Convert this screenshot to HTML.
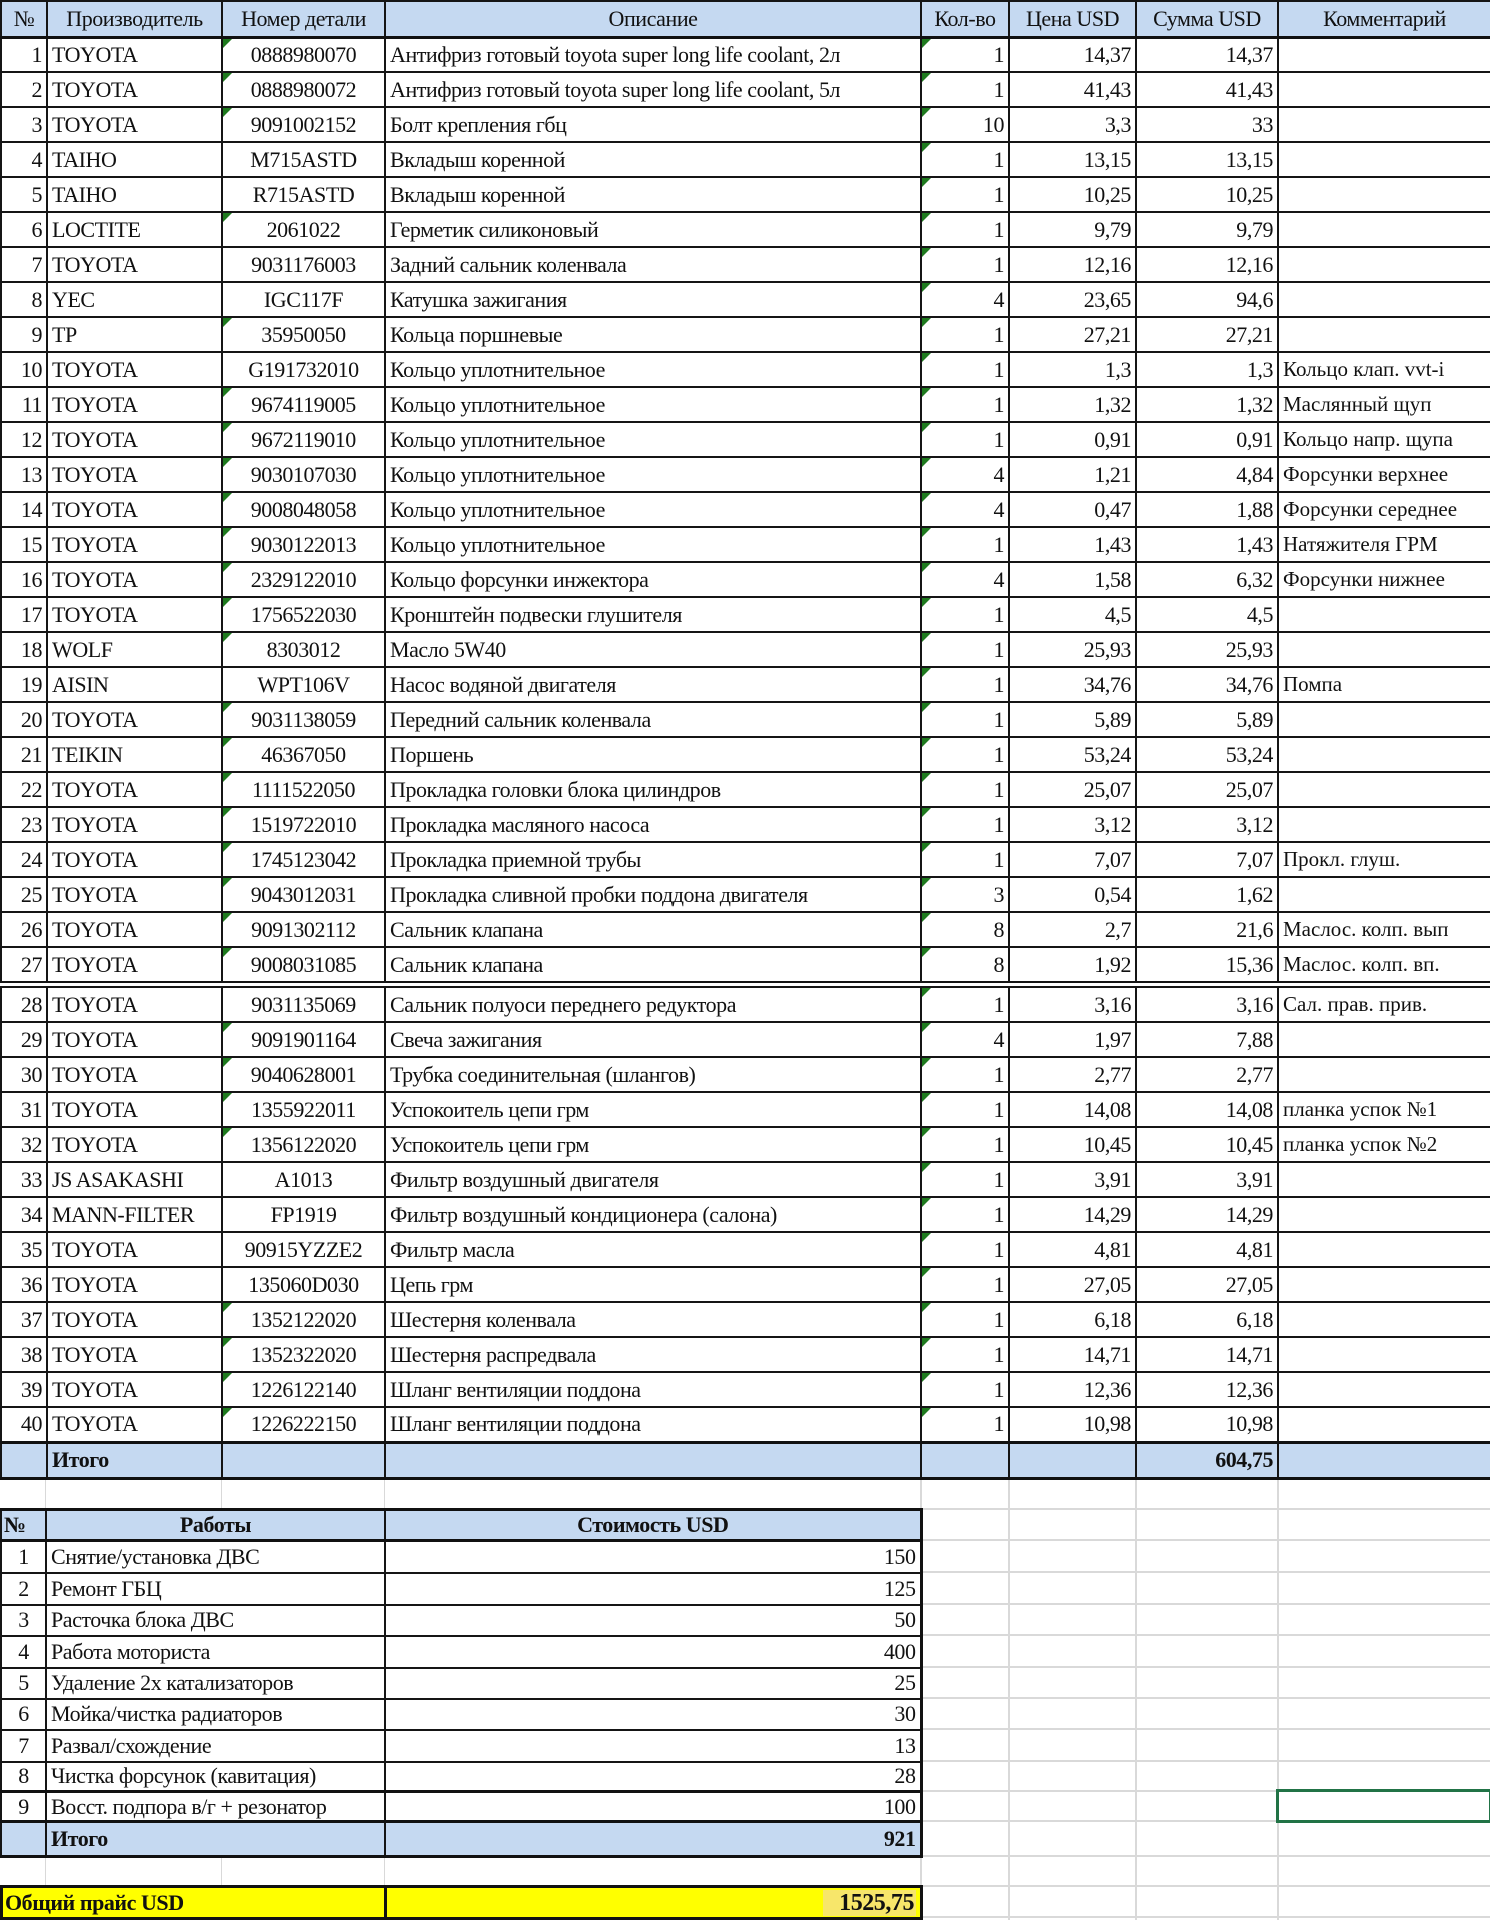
<!DOCTYPE html>
<html><head><meta charset="utf-8">
<style>
*{margin:0;padding:0;box-sizing:border-box}
body{width:1490px;height:1920px;background:#fff;position:relative;overflow:hidden;font-family:"Liberation Serif",serif;color:#111}
table{position:absolute;left:0;border-collapse:collapse;table-layout:fixed;font-size:22px;letter-spacing:-0.45px;background:#fff}
td{border:2px solid #151515;white-space:nowrap;overflow:hidden;padding:0 4px;line-height:1;position:relative;vertical-align:middle}
.c{text-align:center}.r{text-align:right}
.h td{background:#c5d9f1;text-align:center;border-bottom:3px solid #111}
.t td{background:#c5d9f1;font-weight:bold;border-top:3px solid #111;border-bottom:3px solid #111}
.g::before{content:"";position:absolute;left:0;top:0;border-top:9px solid #1f7a1f;border-right:9px solid transparent}
.gl{position:absolute;background:#d9d9d9}
.cm{font-size:21px;letter-spacing:0}
</style></head><body>
<div class="gl" style="left:45px;top:1478px;width:1px;height:442px"></div>
<div class="gl" style="left:221px;top:1478px;width:1px;height:442px"></div>
<div class="gl" style="left:384px;top:1478px;width:1px;height:442px"></div>
<div class="gl" style="left:920px;top:1478px;width:2px;height:442px"></div>
<div class="gl" style="left:1008px;top:1478px;width:2px;height:442px"></div>
<div class="gl" style="left:1135px;top:1478px;width:2px;height:442px"></div>
<div class="gl" style="left:1277px;top:1478px;width:2px;height:442px"></div>
<div class="gl" style="left:0;top:1508px;width:1490px;height:2px"></div>
<div class="gl" style="left:0;top:1539px;width:1490px;height:2px"></div>
<div class="gl" style="left:0;top:1571px;width:1490px;height:2px"></div>
<div class="gl" style="left:0;top:1603px;width:1490px;height:2px"></div>
<div class="gl" style="left:0;top:1634px;width:1490px;height:2px"></div>
<div class="gl" style="left:0;top:1666px;width:1490px;height:2px"></div>
<div class="gl" style="left:0;top:1697px;width:1490px;height:2px"></div>
<div class="gl" style="left:0;top:1728px;width:1490px;height:2px"></div>
<div class="gl" style="left:0;top:1760px;width:1490px;height:2px"></div>
<div class="gl" style="left:0;top:1790px;width:1490px;height:2px"></div>
<div class="gl" style="left:0;top:1820px;width:1490px;height:2px"></div>
<div class="gl" style="left:0;top:1855px;width:1490px;height:2px"></div>
<div class="gl" style="left:0;top:1885px;width:1490px;height:2px"></div>
<div class="gl" style="left:0;top:1916px;width:1490px;height:2px"></div>
<div style="position:absolute;left:1276px;top:1789px;width:216px;height:34px;border:3px solid #217346"></div>

<table style="top:0;width:1490px">
<colgroup><col style="width:46px"><col style="width:175px"><col style="width:163px"><col style="width:536px"><col style="width:88px"><col style="width:127px"><col style="width:142px"><col style="width:213px"></colgroup>
<tr class="h" style="height:36px"><td>№</td><td>Производитель</td><td>Номер детали</td><td>Описание</td><td>Кол-во</td><td>Цена USD</td><td>Сумма USD</td><td>Комментарий</td></tr>
<tr style="height:35px"><td class="r">1</td><td>TOYOTA</td><td class="c g">0888980070</td><td>Антифриз готовый toyota super long life coolant, 2л</td><td class="r g">1</td><td class="r">14,37</td><td class="r">14,37</td><td class="cm"></td></tr>
<tr style="height:35px"><td class="r">2</td><td>TOYOTA</td><td class="c g">0888980072</td><td>Антифриз готовый toyota super long life coolant, 5л</td><td class="r g">1</td><td class="r">41,43</td><td class="r">41,43</td><td class="cm"></td></tr>
<tr style="height:35px"><td class="r">3</td><td>TOYOTA</td><td class="c g">9091002152</td><td>Болт крепления гбц</td><td class="r g">10</td><td class="r">3,3</td><td class="r">33</td><td class="cm"></td></tr>
<tr style="height:35px"><td class="r">4</td><td>TAIHO</td><td class="c">M715ASTD</td><td>Вкладыш коренной</td><td class="r g">1</td><td class="r">13,15</td><td class="r">13,15</td><td class="cm"></td></tr>
<tr style="height:35px"><td class="r">5</td><td>TAIHO</td><td class="c">R715ASTD</td><td>Вкладыш коренной</td><td class="r g">1</td><td class="r">10,25</td><td class="r">10,25</td><td class="cm"></td></tr>
<tr style="height:35px"><td class="r">6</td><td>LOCTITE</td><td class="c g">2061022</td><td>Герметик силиконовый</td><td class="r g">1</td><td class="r">9,79</td><td class="r">9,79</td><td class="cm"></td></tr>
<tr style="height:35px"><td class="r">7</td><td>TOYOTA</td><td class="c">9031176003</td><td>Задний сальник коленвала</td><td class="r g">1</td><td class="r">12,16</td><td class="r">12,16</td><td class="cm"></td></tr>
<tr style="height:35px"><td class="r">8</td><td>YEC</td><td class="c">IGC117F</td><td>Катушка зажигания</td><td class="r g">4</td><td class="r">23,65</td><td class="r">94,6</td><td class="cm"></td></tr>
<tr style="height:35px"><td class="r">9</td><td>TP</td><td class="c g">35950050</td><td>Кольца поршневые</td><td class="r g">1</td><td class="r">27,21</td><td class="r">27,21</td><td class="cm"></td></tr>
<tr style="height:35px"><td class="r">10</td><td>TOYOTA</td><td class="c">G191732010</td><td>Кольцо уплотнительное</td><td class="r g">1</td><td class="r">1,3</td><td class="r">1,3</td><td class="cm">Кольцо клап. vvt-i</td></tr>
<tr style="height:35px"><td class="r">11</td><td>TOYOTA</td><td class="c g">9674119005</td><td>Кольцо уплотнительное</td><td class="r g">1</td><td class="r">1,32</td><td class="r">1,32</td><td class="cm">Маслянный щуп</td></tr>
<tr style="height:35px"><td class="r">12</td><td>TOYOTA</td><td class="c g">9672119010</td><td>Кольцо уплотнительное</td><td class="r g">1</td><td class="r">0,91</td><td class="r">0,91</td><td class="cm">Кольцо напр. щупа</td></tr>
<tr style="height:35px"><td class="r">13</td><td>TOYOTA</td><td class="c g">9030107030</td><td>Кольцо уплотнительное</td><td class="r g">4</td><td class="r">1,21</td><td class="r">4,84</td><td class="cm">Форсунки верхнее</td></tr>
<tr style="height:35px"><td class="r">14</td><td>TOYOTA</td><td class="c g">9008048058</td><td>Кольцо уплотнительное</td><td class="r g">4</td><td class="r">0,47</td><td class="r">1,88</td><td class="cm">Форсунки середнее</td></tr>
<tr style="height:35px"><td class="r">15</td><td>TOYOTA</td><td class="c g">9030122013</td><td>Кольцо уплотнительное</td><td class="r g">1</td><td class="r">1,43</td><td class="r">1,43</td><td class="cm">Натяжителя ГРМ</td></tr>
<tr style="height:35px"><td class="r">16</td><td>TOYOTA</td><td class="c g">2329122010</td><td>Кольцо форсунки инжектора</td><td class="r g">4</td><td class="r">1,58</td><td class="r">6,32</td><td class="cm">Форсунки нижнее</td></tr>
<tr style="height:35px"><td class="r">17</td><td>TOYOTA</td><td class="c g">1756522030</td><td>Кронштейн подвески глушителя</td><td class="r g">1</td><td class="r">4,5</td><td class="r">4,5</td><td class="cm"></td></tr>
<tr style="height:35px"><td class="r">18</td><td>WOLF</td><td class="c g">8303012</td><td>Масло 5W40</td><td class="r g">1</td><td class="r">25,93</td><td class="r">25,93</td><td class="cm"></td></tr>
<tr style="height:35px"><td class="r">19</td><td>AISIN</td><td class="c">WPT106V</td><td>Насос водяной двигателя</td><td class="r g">1</td><td class="r">34,76</td><td class="r">34,76</td><td class="cm">Помпа</td></tr>
<tr style="height:35px"><td class="r">20</td><td>TOYOTA</td><td class="c g">9031138059</td><td>Передний сальник коленвала</td><td class="r g">1</td><td class="r">5,89</td><td class="r">5,89</td><td class="cm"></td></tr>
<tr style="height:35px"><td class="r">21</td><td>TEIKIN</td><td class="c g">46367050</td><td>Поршень</td><td class="r g">1</td><td class="r">53,24</td><td class="r">53,24</td><td class="cm"></td></tr>
<tr style="height:35px"><td class="r">22</td><td>TOYOTA</td><td class="c g">1111522050</td><td>Прокладка головки блока цилиндров</td><td class="r g">1</td><td class="r">25,07</td><td class="r">25,07</td><td class="cm"></td></tr>
<tr style="height:35px"><td class="r">23</td><td>TOYOTA</td><td class="c g">1519722010</td><td>Прокладка масляного насоса</td><td class="r g">1</td><td class="r">3,12</td><td class="r">3,12</td><td class="cm"></td></tr>
<tr style="height:35px"><td class="r">24</td><td>TOYOTA</td><td class="c g">1745123042</td><td>Прокладка приемной трубы</td><td class="r g">1</td><td class="r">7,07</td><td class="r">7,07</td><td class="cm">Прокл. глуш.</td></tr>
<tr style="height:35px"><td class="r">25</td><td>TOYOTA</td><td class="c g">9043012031</td><td>Прокладка сливной пробки поддона двигателя</td><td class="r g">3</td><td class="r">0,54</td><td class="r">1,62</td><td class="cm"></td></tr>
<tr style="height:35px"><td class="r">26</td><td>TOYOTA</td><td class="c g">9091302112</td><td>Сальник клапана</td><td class="r g">8</td><td class="r">2,7</td><td class="r">21,6</td><td class="cm">Маслос. колп. вып</td></tr>
<tr style="height:35px"><td class="r">27</td><td>TOYOTA</td><td class="c g">9008031085</td><td>Сальник клапана</td><td class="r g">8</td><td class="r">1,92</td><td class="r">15,36</td><td class="cm">Маслос. колп. вп.</td></tr>
</table>

<table style="top:986px;width:1490px">
<colgroup><col style="width:46px"><col style="width:175px"><col style="width:163px"><col style="width:536px"><col style="width:88px"><col style="width:127px"><col style="width:142px"><col style="width:213px"></colgroup>
<tr style="height:35px"><td class="r">28</td><td>TOYOTA</td><td class="c">9031135069</td><td>Сальник полуоси переднего редуктора</td><td class="r g">1</td><td class="r">3,16</td><td class="r">3,16</td><td class="cm">Сал. прав. прив.</td></tr>
<tr style="height:35px"><td class="r">29</td><td>TOYOTA</td><td class="c g">9091901164</td><td>Свеча зажигания</td><td class="r g">4</td><td class="r">1,97</td><td class="r">7,88</td><td class="cm"></td></tr>
<tr style="height:35px"><td class="r">30</td><td>TOYOTA</td><td class="c g">9040628001</td><td>Трубка соединительная (шлангов)</td><td class="r g">1</td><td class="r">2,77</td><td class="r">2,77</td><td class="cm"></td></tr>
<tr style="height:35px"><td class="r">31</td><td>TOYOTA</td><td class="c g">1355922011</td><td>Успокоитель цепи грм</td><td class="r g">1</td><td class="r">14,08</td><td class="r">14,08</td><td class="cm">планка успок №1</td></tr>
<tr style="height:35px"><td class="r">32</td><td>TOYOTA</td><td class="c g">1356122020</td><td>Успокоитель цепи грм</td><td class="r g">1</td><td class="r">10,45</td><td class="r">10,45</td><td class="cm">планка успок №2</td></tr>
<tr style="height:35px"><td class="r">33</td><td>JS ASAKASHI</td><td class="c">A1013</td><td>Фильтр воздушный двигателя</td><td class="r g">1</td><td class="r">3,91</td><td class="r">3,91</td><td class="cm"></td></tr>
<tr style="height:35px"><td class="r">34</td><td>MANN-FILTER</td><td class="c">FP1919</td><td>Фильтр воздушный кондиционера (салона)</td><td class="r g">1</td><td class="r">14,29</td><td class="r">14,29</td><td class="cm"></td></tr>
<tr style="height:35px"><td class="r">35</td><td>TOYOTA</td><td class="c">90915YZZE2</td><td>Фильтр масла</td><td class="r g">1</td><td class="r">4,81</td><td class="r">4,81</td><td class="cm"></td></tr>
<tr style="height:35px"><td class="r">36</td><td>TOYOTA</td><td class="c">135060D030</td><td>Цепь грм</td><td class="r g">1</td><td class="r">27,05</td><td class="r">27,05</td><td class="cm"></td></tr>
<tr style="height:35px"><td class="r">37</td><td>TOYOTA</td><td class="c g">1352122020</td><td>Шестерня коленвала</td><td class="r g">1</td><td class="r">6,18</td><td class="r">6,18</td><td class="cm"></td></tr>
<tr style="height:35px"><td class="r">38</td><td>TOYOTA</td><td class="c g">1352322020</td><td>Шестерня распредвала</td><td class="r g">1</td><td class="r">14,71</td><td class="r">14,71</td><td class="cm"></td></tr>
<tr style="height:35px"><td class="r">39</td><td>TOYOTA</td><td class="c g">1226122140</td><td>Шланг вентиляции поддона</td><td class="r g">1</td><td class="r">12,36</td><td class="r">12,36</td><td class="cm"></td></tr>
<tr style="height:35px"><td class="r">40</td><td>TOYOTA</td><td class="c g">1226222150</td><td>Шланг вентиляции поддона</td><td class="r g">1</td><td class="r">10,98</td><td class="r">10,98</td><td class="cm"></td></tr>
<tr class="t" style="height:36px"><td></td><td>Итого</td><td></td><td></td><td></td><td></td><td class="r">604,75</td><td></td></tr>
</table>

<table style="top:1508px;width:920px">
<colgroup><col style="width:45px"><col style="width:339px"><col style="width:536px"></colgroup>
<tr class="h" style="height:31px;font-weight:bold"><td style="text-align:left;padding-left:2px;border-top:3px solid #111">№</td><td style="border-top:3px solid #111">Работы</td><td style="border-top:3px solid #111;border-right:3px solid #111">Стоимость USD</td></tr>
<tr style="height:32px"><td class="c">1</td><td>Снятие/установка ДВС</td><td class="r" style="border-right:3px solid #111">150</td></tr>
<tr style="height:32px"><td class="c">2</td><td>Ремонт ГБЦ</td><td class="r" style="border-right:3px solid #111">125</td></tr>
<tr style="height:31px"><td class="c">3</td><td>Расточка блока ДВС</td><td class="r" style="border-right:3px solid #111">50</td></tr>
<tr style="height:32px"><td class="c">4</td><td>Работа моториста</td><td class="r" style="border-right:3px solid #111">400</td></tr>
<tr style="height:31px"><td class="c">5</td><td>Удаление 2х катализаторов</td><td class="r" style="border-right:3px solid #111">25</td></tr>
<tr style="height:31px"><td class="c">6</td><td>Мойка/чистка радиаторов</td><td class="r" style="border-right:3px solid #111">30</td></tr>
<tr style="height:32px"><td class="c">7</td><td>Развал/схождение</td><td class="r" style="border-right:3px solid #111">13</td></tr>
<tr style="height:30px"><td class="c">8</td><td>Чистка форсунок (кавитация)</td><td class="r" style="border-right:3px solid #111">28</td></tr>
<tr style="height:30px"><td class="c" style="border-top:3px solid #111">9</td><td style="border-top:3px solid #111">Восст. подпора в/г + резонатор</td><td class="r" style="border-top:3px solid #111;border-right:3px solid #111">100</td></tr>
<tr class="t" style="height:35px"><td></td><td>Итого</td><td class="r" style="border-right:3px solid #111">921</td></tr>
</table>

<table style="top:1885px;width:920px">
<colgroup><col style="width:384px"><col style="width:536px"></colgroup>
<tr style="height:32px;font-weight:bold"><td style="background:#ffff00;border:3px solid #111;padding-left:2px">Общий прайс USD</td><td class="r" style="background:#ffff00;border:3px solid #111;font-size:24px"><span style="background:#f7e66a;padding:0 2px 0 16px">1525,75</span></td></tr>
</table>
</body></html>
